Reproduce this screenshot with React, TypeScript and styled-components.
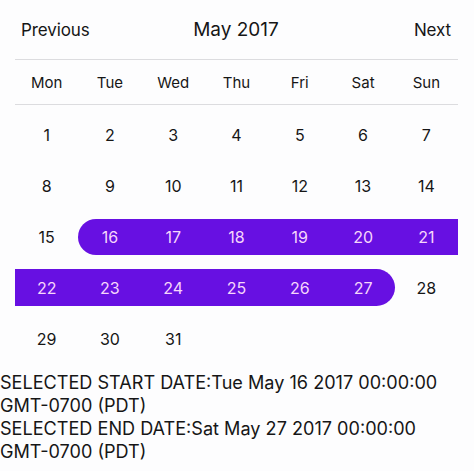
import React from "react";
import styled, { createGlobalStyle } from "styled-components";

const GlobalStyle = createGlobalStyle`
  body {
    margin: 0;
    background: #fdfdfe;
    font-family: Inter, "Liberation Sans", sans-serif;
    color: #161616;
  }
`;

const Calendar = styled.div`
  padding: 0 16px 0 15px;
`;

const Header = styled.div`
  height: 59px;
  display: grid;
  grid-template-columns: 1fr auto 1fr;
  align-items: center;
  padding: 0 7px 0 6px;
  border-bottom: 1.5px solid #dcdcdf;
`;

const NavButton = styled.span<{ $align: "left" | "right" }>`
  font-size: 17px;
  letter-spacing: -0.1px;
  text-align: ${(p) => p.$align};
`;

const MonthTitle = styled.span`
  font-size: 19px;
`;

const WeekRow = styled.div`
  display: grid;
  grid-template-columns: repeat(7, 1fr);
  height: 44px;
  align-items: center;
  border-bottom: 1.5px solid #dcdcdf;
`;

const WeekDay = styled.span`
  text-align: center;
  font-size: 15px;
`;

const DayGrid = styled.div`
  display: grid;
  grid-template-columns: repeat(7, 1fr);
  grid-auto-rows: 50.8px;
  padding-top: 5px;
`;

type Edge = "start" | "end" | "mid" | "none";

const DayCell = styled.div<{ $edge: Edge }>`
  display: flex;
  align-items: center;
  justify-content: center;
  font-size: 16px;
  margin: 7px 0;
  background: ${(p) => (p.$edge === "none" ? "transparent" : "#6710e2")};
  color: ${(p) => (p.$edge === "none" ? "#161616" : "#f6d6fb")};
  border-radius: ${(p) =>
    p.$edge === "start" ? "19px 0 0 19px" : p.$edge === "end" ? "0 19px 19px 0" : "0"};
`;

const Footer = styled.div`
  margin-top: 7px;
  font-size: 18.1px;
  line-height: 23px;
`;

const weekDays = ["Mon", "Tue", "Wed", "Thu", "Fri", "Sat", "Sun"];
const rangeStart = 16;
const rangeEnd = 27;

function edgeFor(day: number): Edge {
  if (day < rangeStart || day > rangeEnd) return "none";
  if (day === rangeStart) return "start";
  if (day === rangeEnd) return "end";
  return "mid";
}

export default function App() {
  const days = Array.from({ length: 31 }, (_, i) => i + 1);
  return (
    <>
      <GlobalStyle />
      <Calendar>
        <Header>
          <NavButton $align="left">Previous</NavButton>
          <MonthTitle>May 2017</MonthTitle>
          <NavButton $align="right">Next</NavButton>
        </Header>
        <WeekRow>
          {weekDays.map((d) => (
            <WeekDay key={d}>{d}</WeekDay>
          ))}
        </WeekRow>
        <DayGrid>
          {days.map((d) => (
            <DayCell key={d} $edge={edgeFor(d)}>
              {d}
            </DayCell>
          ))}
        </DayGrid>
      </Calendar>
      <Footer>
        SELECTED START DATE:Tue May 16 2017 00:00:00
        <br />
        GMT-0700 (PDT)
        <br />
        SELECTED END DATE:Sat May 27 2017 00:00:00
        <br />
        GMT-0700 (PDT)
      </Footer>
    </>
  );
}
